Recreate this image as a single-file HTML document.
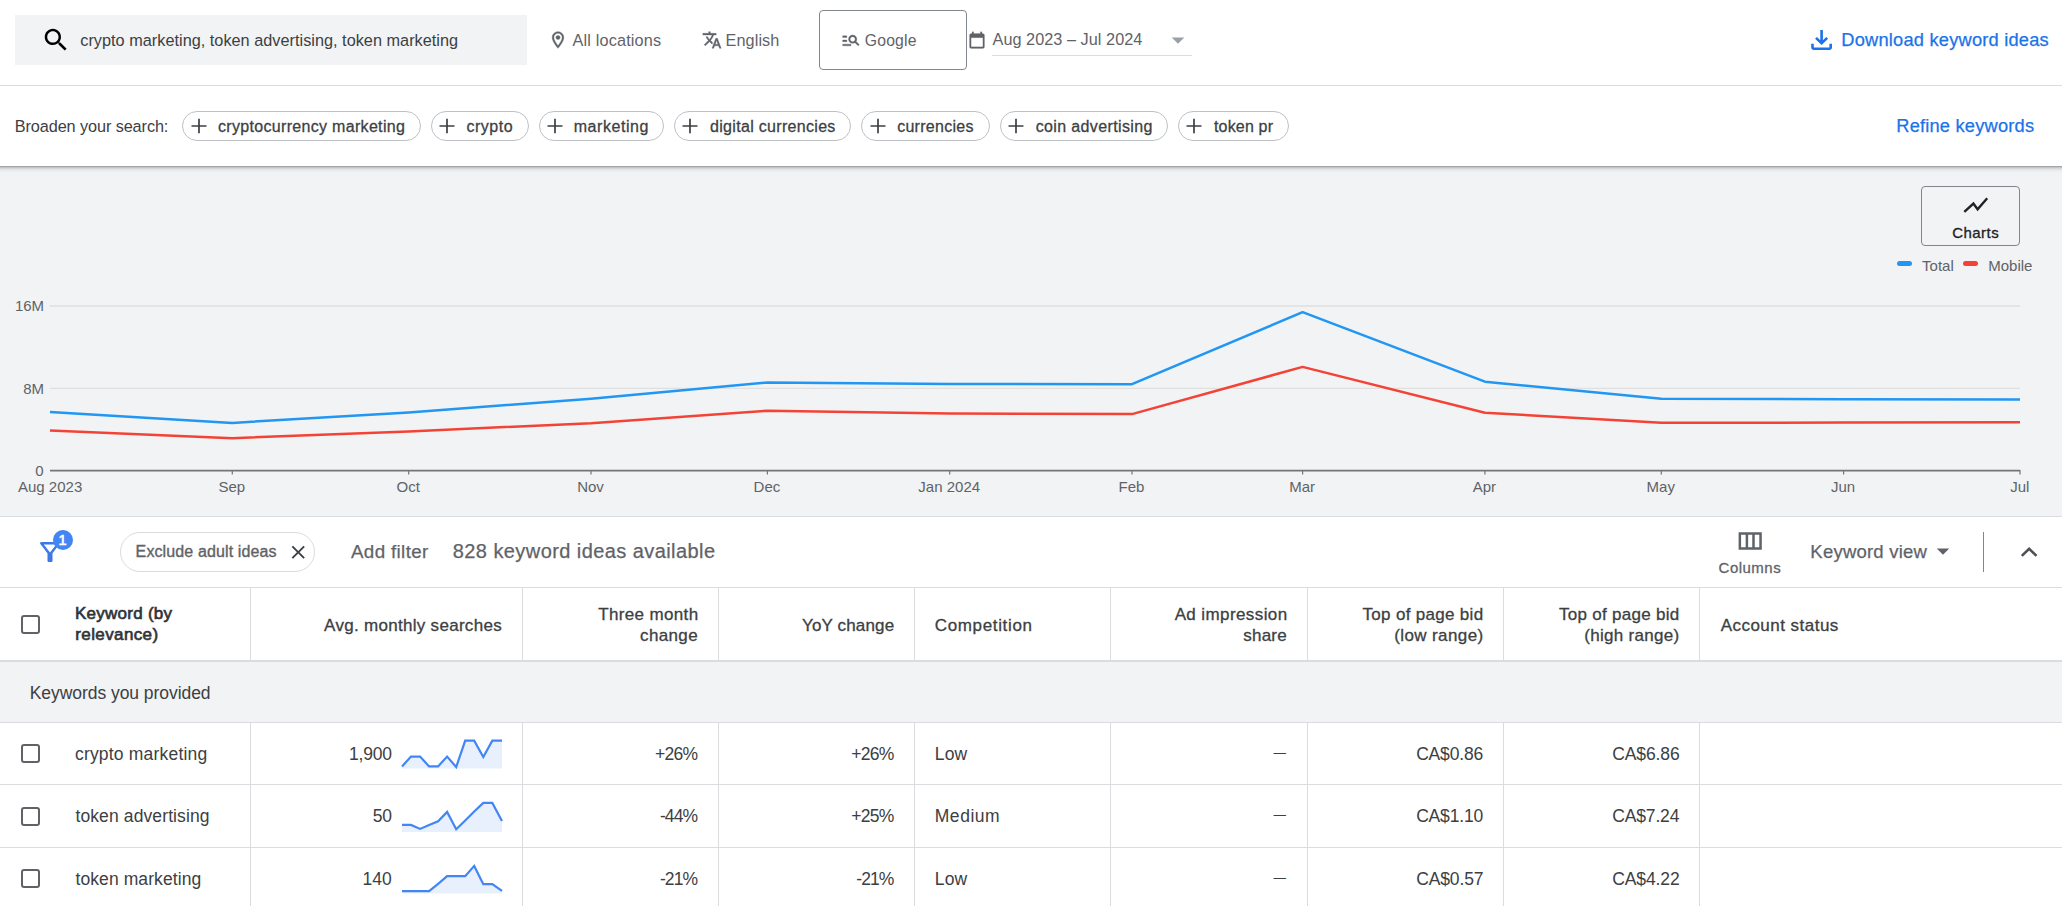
<!DOCTYPE html>
<html lang="en"><head><meta charset="utf-8"><title>Keyword ideas</title>
<style>
html,body{margin:0;padding:0;background:#fff}
body{width:2062px;height:906px;position:relative;overflow:hidden;font-family:"Liberation Sans",sans-serif}
.t{position:absolute;white-space:nowrap;line-height:24px;height:24px}
.i{position:absolute;display:block;overflow:visible}
.b{position:absolute}
</style></head><body>
<div class="b" style="left:15px;top:15px;width:512px;height:50px;background:#f1f3f4"></div>
<svg class="i" style="left:40.90px;top:25.20px" width="30" height="30" viewBox="0 0 24 24" fill="#000" ><path d="M15.5 14h-.79l-.28-.27C15.41 12.59 16 11.11 16 9.5 16 5.91 13.09 3 9.5 3S3 5.91 3 9.5 5.91 16 9.5 16c1.61 0 3.09-.59 4.23-1.57l.27.28v.79l5 4.99L20.49 19l-4.99-5zm-6 0C7.01 14 5 11.99 5 9.5S7.01 5 9.5 5 14 7.01 14 9.5 11.99 14 9.5 14z"/></svg>
<span id="q" class="t" style="left:80.29px;top:28px;font-size:16.25px;color:#3c4043;font-weight:normal;letter-spacing:0.022px;">crypto marketing, token advertising, token marketing</span>
<svg class="i" style="left:547.90px;top:30.00px" width="20" height="20" viewBox="0 0 24 24" fill="#5f6368"  stroke="#5f6368" stroke-width="0.45" stroke-linejoin="round"><path d="M12 2C8.13 2 5 5.13 5 9c0 5.25 7 13 7 13s7-7.75 7-13c0-3.87-3.13-7-7-7zM7 9c0-2.76 2.24-5 5-5s5 2.24 5 5c0 2.88-2.88 7.19-5 9.88C9.92 16.21 7 11.85 7 9z"/><circle cx="12" cy="9" r="2.5"/></svg>
<span id="loc" class="t" style="left:572.44px;top:28px;font-size:16.25px;color:#5f6368;font-weight:normal;letter-spacing:0.167px;">All locations</span>
<svg class="i" style="left:701.70px;top:29.80px" width="20" height="20" viewBox="0 0 24 24" fill="#5f6368"  stroke="#5f6368" stroke-width="0.4" stroke-linejoin="round"><path d="M12.87 15.07l-2.54-2.51.03-.03c1.74-1.94 2.98-4.17 3.71-6.53H17V4h-7V2H8v2H1v1.99h11.17C11.5 7.92 10.44 9.75 9 11.35 8.07 10.32 7.3 9.19 6.69 8h-2c.73 1.63 1.73 3.17 2.98 4.56l-5.09 5.02L4 19l5-5 3.11 3.11.76-2.04zM18.5 10h-2L12 22h2l1.12-3h4.75L21 22h2l-4.5-12zm-2.62 7l1.62-4.33L19.12 17h-3.24z"/></svg>
<span id="eng" class="t" style="left:725.54px;top:28px;font-size:16.25px;color:#5f6368;font-weight:normal;letter-spacing:0.083px;">English</span>
<div class="b" style="left:819px;top:10px;width:148px;height:60px;border:1px solid #80868b;border-radius:4px;box-sizing:border-box"></div>
<svg class="i" style="left:840.50px;top:30.40px" width="20" height="20" viewBox="0 0 24 24" fill="#5f6368"  stroke="#5f6368" stroke-width="0.4" stroke-linejoin="round"><path d="M7 9H2V7h5v2zm0 3H2v2h5v-2zm13.59 7l-3.83-3.83c-.8.52-1.74.83-2.76.83-2.76 0-5-2.24-5-5s2.24-5 5-5 5 2.24 5 5c0 1.02-.31 1.96-.83 2.75L22 17.59 20.59 19zM17 11c0-1.65-1.35-3-3-3s-3 1.35-3 3 1.35 3 3 3 3-1.35 3-3zM2 19h10v-2H2v2z"/></svg>
<span id="goo" class="t" style="left:864.75px;top:29px;font-size:15.75px;color:#5f6368;font-weight:normal;letter-spacing:0.190px;">Google</span>
<svg class="i" style="left:966.90px;top:30.90px" width="20" height="20" viewBox="0 0 24 24" fill="#5f6368"  stroke="#5f6368" stroke-width="0.15" stroke-linejoin="round"><path d="M19 3h-1V1h-2v2H8V1H6v2H5c-1.11 0-1.99.9-1.99 2L3 19c0 1.1.89 2 2 2h14c1.1 0 2-.9 2-2V5c0-1.1-.9-2-2-2zm0 16H5V8h14v11z"/></svg>
<span id="date" class="t" style="left:992.50px;top:27px;font-size:16.25px;color:#5f6368;font-weight:normal;letter-spacing:0.042px;">Aug 2023 – Jul 2024</span>
<svg class="i" style="left:1162.60px;top:24.90px" width="30" height="30" viewBox="0 0 24 24" fill="#9aa0a6" ><path d="M7 10l5 5 5-5z"/></svg>
<div class="b" style="left:992px;top:55px;width:200px;height:1px;background:#dadce0"></div>
<svg class="i" style="left:1805.95px;top:25px" width="31.2" height="30" viewBox="0 0 24 24" preserveAspectRatio="none" fill="#1a73e8"><path d="M18 15v3H6v-3H4v3c0 1.1.9 2 2 2h12c1.1 0 2-.9 2-2v-3h-2zm-1-4l-1.41-1.41L13 12.17V4h-2v8.17L8.41 9.59 7 11l5 5 5-5z"/></svg>
<span id="dl" class="t" style="left:1841.25px;top:28px;font-size:18.25px;color:#1a73e8;font-weight:normal;letter-spacing:0.217px;-webkit-text-stroke:0.25px #1a73e8;">Download keyword ideas</span>
<div class="b" style="left:0px;top:85px;width:2062px;height:1px;background:#dadce0"></div>
<span id="br" class="t" style="left:14.75px;top:114px;font-size:16.25px;color:#3c4043;font-weight:normal;letter-spacing:-0.092px;">Broaden your search:</span>
<div class="b" style="left:182px;top:111px;width:239px;height:30px;border:1px solid #bdc1c6;border-radius:15px;box-sizing:border-box"></div>
<svg class="i" style="left:189.50px;top:117.00px" width="18" height="18" viewBox="0 0 18 18"><path d="M1.5 9h15M9 1.7v14.6" stroke="#3c4043" stroke-width="1.7" fill="none"/></svg>
<span id="chip0" class="t" style="left:218.00px;top:115px;font-size:16px;color:#3c4043;font-weight:normal;letter-spacing:0.315px;-webkit-text-stroke:0.28px #3c4043;">cryptocurrency marketing</span>
<div class="b" style="left:431px;top:111px;width:98px;height:30px;border:1px solid #bdc1c6;border-radius:15px;box-sizing:border-box"></div>
<svg class="i" style="left:437.80px;top:117.00px" width="18" height="18" viewBox="0 0 18 18"><path d="M1.5 9h15M9 1.7v14.6" stroke="#3c4043" stroke-width="1.7" fill="none"/></svg>
<span id="chip1" class="t" style="left:466.50px;top:115px;font-size:16px;color:#3c4043;font-weight:normal;letter-spacing:0.500px;-webkit-text-stroke:0.28px #3c4043;">crypto</span>
<div class="b" style="left:539px;top:111px;width:125px;height:30px;border:1px solid #bdc1c6;border-radius:15px;box-sizing:border-box"></div>
<svg class="i" style="left:545.70px;top:117.00px" width="18" height="18" viewBox="0 0 18 18"><path d="M1.5 9h15M9 1.7v14.6" stroke="#3c4043" stroke-width="1.7" fill="none"/></svg>
<span id="chip2" class="t" style="left:573.69px;top:115px;font-size:16px;color:#3c4043;font-weight:normal;letter-spacing:0.562px;-webkit-text-stroke:0.28px #3c4043;">marketing</span>
<div class="b" style="left:674px;top:111px;width:177px;height:30px;border:1px solid #bdc1c6;border-radius:15px;box-sizing:border-box"></div>
<svg class="i" style="left:681.20px;top:117.00px" width="18" height="18" viewBox="0 0 18 18"><path d="M1.5 9h15M9 1.7v14.6" stroke="#3c4043" stroke-width="1.7" fill="none"/></svg>
<span id="chip3" class="t" style="left:710.04px;top:115px;font-size:16px;color:#3c4043;font-weight:normal;letter-spacing:0.309px;-webkit-text-stroke:0.28px #3c4043;">digital currencies</span>
<div class="b" style="left:861px;top:111px;width:129px;height:30px;border:1px solid #bdc1c6;border-radius:15px;box-sizing:border-box"></div>
<svg class="i" style="left:868.50px;top:117.00px" width="18" height="18" viewBox="0 0 18 18"><path d="M1.5 9h15M9 1.7v14.6" stroke="#3c4043" stroke-width="1.7" fill="none"/></svg>
<span id="chip4" class="t" style="left:897.19px;top:115px;font-size:16px;color:#3c4043;font-weight:normal;letter-spacing:0.267px;-webkit-text-stroke:0.28px #3c4043;">currencies</span>
<div class="b" style="left:1000px;top:111px;width:168px;height:30px;border:1px solid #bdc1c6;border-radius:15px;box-sizing:border-box"></div>
<svg class="i" style="left:1006.90px;top:117.00px" width="18" height="18" viewBox="0 0 18 18"><path d="M1.5 9h15M9 1.7v14.6" stroke="#3c4043" stroke-width="1.7" fill="none"/></svg>
<span id="chip5" class="t" style="left:1035.64px;top:115px;font-size:16px;color:#3c4043;font-weight:normal;letter-spacing:0.370px;-webkit-text-stroke:0.28px #3c4043;">coin advertising</span>
<div class="b" style="left:1178px;top:111px;width:111px;height:30px;border:1px solid #bdc1c6;border-radius:15px;box-sizing:border-box"></div>
<svg class="i" style="left:1184.70px;top:117.00px" width="18" height="18" viewBox="0 0 18 18"><path d="M1.5 9h15M9 1.7v14.6" stroke="#3c4043" stroke-width="1.7" fill="none"/></svg>
<span id="chip6" class="t" style="left:1214.00px;top:115px;font-size:16px;color:#3c4043;font-weight:normal;letter-spacing:0.164px;-webkit-text-stroke:0.28px #3c4043;">token pr</span>
<span id="refine" class="t" style="left:1896.25px;top:114px;font-size:18.25px;color:#1a73e8;font-weight:normal;letter-spacing:0.204px;-webkit-text-stroke:0.25px #1a73e8;">Refine keywords</span>
<div class="b" style="left:0px;top:166px;width:2062px;height:350px;background:#f1f3f4"></div>
<div class="b" style="left:0px;top:166px;width:2062px;height:1px;background:#a3a5a6"></div>
<div class="b" style="left:0px;top:167px;width:2062px;height:1px;background:#c2c4c6"></div>
<div class="b" style="left:0px;top:168px;width:2062px;height:1px;background:#d5d7d9"></div>
<div class="b" style="left:0px;top:169px;width:2062px;height:1px;background:#e2e3e5"></div>
<div class="b" style="left:0px;top:170px;width:2062px;height:1px;background:#e9ebed"></div>
<div class="b" style="left:0px;top:171px;width:2062px;height:1px;background:#edeff1"></div>
<div class="b" style="left:0px;top:172px;width:2062px;height:1px;background:#f0f1f3"></div>
<div class="b" style="left:0px;top:516px;width:2062px;height:1px;background:#dadce0"></div>
<div class="b" style="left:1921px;top:186px;width:99px;height:60px;border:1px solid #80868b;border-radius:4px;box-sizing:border-box"></div>
<svg class="i" style="left:1955px;top:190px" width="40" height="30" viewBox="1955 190 40 30"><polyline points="1964.3,211.8 1973.4,203.6 1977.6,209.3 1987.2,198.2" fill="none" stroke="#202124" stroke-width="2.4" stroke-linejoin="miter"/></svg>
<span id="charts" class="t" style="left:1952.14px;top:221px;font-size:15px;color:#202124;font-weight:normal;letter-spacing:0.470px;-webkit-text-stroke:0.3px #202124;">Charts</span>
<div class="b" style="left:1897px;top:261px;width:15px;height:5px;background:#2196f3;border-radius:2.5px"></div>
<span id="total" class="t" style="left:1922.10px;top:254px;font-size:15px;color:#5f6368;font-weight:normal;letter-spacing:0.000px;">Total</span>
<div class="b" style="left:1963px;top:261px;width:15px;height:5px;background:#f44336;border-radius:2.5px"></div>
<span id="mobile" class="t" style="left:1988.25px;top:254px;font-size:15px;color:#5f6368;font-weight:normal;letter-spacing:0.000px;">Mobile</span>
<svg class="i" style="left:0;top:280px" width="2062" height="236" viewBox="0 280 2062 236"><path d="M50 306h1970M50 388.3h1970" stroke="#e0e0e0" stroke-width="1.3" fill="none"/><path d="M50 470.7h1970" stroke="#757575" stroke-width="1.8" fill="none"/><path d="M232.3 470v4.5M408.7 470v4.5M591.0 470v4.5M767.4 470v4.5M949.7 470v4.5M1132.0 470v4.5M1302.6 470v4.5M1484.9 470v4.5M1661.3 470v4.5M1843.6 470v4.5M2020.0 470v4.5" stroke="#757575" stroke-width="1.2" fill="none"/><polyline points="50.0,412.0 232.3,422.9 408.7,412.4 591.0,398.8 767.4,382.5 949.7,383.9 1132.0,384.2 1302.6,312.2 1484.9,381.7 1661.3,398.8 1843.6,399.2 2020.0,399.6" fill="none" stroke="#2196f3" stroke-width="2.5" stroke-linejoin="round"/><polyline points="50.0,430.4 232.3,438.2 408.7,431.4 591.0,423.2 767.4,410.7 949.7,413.4 1132.0,414.1 1302.6,366.9 1484.9,412.7 1661.3,422.7 1843.6,422.6 2020.0,422.3" fill="none" stroke="#f44336" stroke-width="2.5" stroke-linejoin="round"/></svg>
<span id="xl0" class="t" style="left:18.00px;top:475px;font-size:15px;color:#5f6368;font-weight:normal;letter-spacing:0.000px;">Aug 2023</span>
<span id="xl1" class="t" style="left:231.80px;transform:translateX(-50%);top:475px;font-size:15px;color:#5f6368;font-weight:normal;letter-spacing:0.000px;">Sep</span>
<span id="xl2" class="t" style="left:408.22px;transform:translateX(-50%);top:475px;font-size:15px;color:#5f6368;font-weight:normal;letter-spacing:0.000px;">Oct</span>
<span id="xl3" class="t" style="left:590.51px;transform:translateX(-50%);top:475px;font-size:15px;color:#5f6368;font-weight:normal;letter-spacing:0.000px;">Nov</span>
<span id="xl4" class="t" style="left:766.93px;transform:translateX(-50%);top:475px;font-size:15px;color:#5f6368;font-weight:normal;letter-spacing:0.000px;">Dec</span>
<span id="xl5" class="t" style="left:949.23px;transform:translateX(-50%);top:475px;font-size:15px;color:#5f6368;font-weight:normal;letter-spacing:0.000px;">Jan 2024</span>
<span id="xl6" class="t" style="left:1131.53px;transform:translateX(-50%);top:475px;font-size:15px;color:#5f6368;font-weight:normal;letter-spacing:0.000px;">Feb</span>
<span id="xl7" class="t" style="left:1302.07px;transform:translateX(-50%);top:475px;font-size:15px;color:#5f6368;font-weight:normal;letter-spacing:0.000px;">Mar</span>
<span id="xl8" class="t" style="left:1484.37px;transform:translateX(-50%);top:475px;font-size:15px;color:#5f6368;font-weight:normal;letter-spacing:0.000px;">Apr</span>
<span id="xl9" class="t" style="left:1660.78px;transform:translateX(-50%);top:475px;font-size:15px;color:#5f6368;font-weight:normal;letter-spacing:0.000px;">May</span>
<span id="xl10" class="t" style="left:1843.08px;transform:translateX(-50%);top:475px;font-size:15px;color:#5f6368;font-weight:normal;letter-spacing:0.000px;">Jun</span>
<span id="xl11" class="t" style="right:32.69px;top:475px;font-size:15px;color:#5f6368;font-weight:normal;letter-spacing:0.000px;">Jul</span>
<span id="y16" class="t" style="right:2017.94px;top:294px;font-size:15px;color:#5f6368;font-weight:normal;letter-spacing:0.000px;">16M</span>
<span id="y8" class="t" style="right:2017.94px;top:377px;font-size:15px;color:#5f6368;font-weight:normal;letter-spacing:0.000px;">8M</span>
<span id="y0" class="t" style="right:2018.35px;top:459px;font-size:15px;color:#5f6368;font-weight:normal;letter-spacing:0.000px;">0</span>
<svg class="i" style="left:35.30px;top:537.10px" width="30" height="30" viewBox="0 0 24 24" fill="#3c78e6" ><path d="M7 6h10l-5.01 6.3L7 6zm-2.75-.39C6.27 8.2 10 13 10 13v6c0 .55.45 1 1 1h2c.55 0 1-.45 1-1v-6s3.72-4.8 5.74-7.39c.51-.66.04-1.61-.79-1.61H5.04c-.83 0-1.3.95-.79 1.61z"/></svg>
<div class="b" style="left:53.2px;top:530px;width:19.8px;height:19.8px;background:#4285f4;border-radius:50%"></div>
<span id="badge" class="t" style="left:62.60px;transform:translateX(-50%);top:528px;font-size:14.5px;color:#fff;font-weight:normal;letter-spacing:0.000px;-webkit-text-stroke:0.6px #fff;">1</span>
<div class="b" style="left:120px;top:532px;width:195px;height:40px;border:1px solid #dadce0;border-radius:20px;box-sizing:border-box"></div>
<span id="excl" class="t" style="left:135.60px;top:540px;font-size:16px;color:#5f6368;font-weight:normal;letter-spacing:0.119px;-webkit-text-stroke:0.36px #5f6368;">Exclude adult ideas</span>
<svg class="i" style="left:286.95px;top:541.15px" width="22.5" height="22.5" viewBox="0 0 24 24" fill="#3c4043" ><path d="M19 6.41L17.59 5 12 10.59 6.41 5 5 6.41 10.59 12 5 17.59 6.41 19 12 13.41 17.59 19 19 17.59 13.41 12z"/></svg>
<span id="addf" class="t" style="left:351.00px;top:540px;font-size:18.75px;color:#5f6368;font-weight:normal;letter-spacing:0.361px;-webkit-text-stroke:0.25px #5f6368;">Add filter</span>
<span id="avail" class="t" style="left:452.75px;top:539px;font-size:20px;color:#5f6368;font-weight:normal;letter-spacing:0.425px;-webkit-text-stroke:0.25px #5f6368;">828 keyword ideas available</span>
<svg class="i" style="left:1735px;top:528px" width="30" height="26" viewBox="1735 528 30 26"><path d="M1739.85 533.45h20.7v15.1h-20.7zM1746.9 533.5v15M1753.5 533.5v15" fill="none" stroke="#5f6368" stroke-width="2.5"/></svg>
<span id="cols" class="t" style="left:1718.60px;top:556px;font-size:15px;color:#5f6368;font-weight:normal;letter-spacing:0.475px;-webkit-text-stroke:0.3px #5f6368;">Columns</span>
<span id="kview" class="t" style="left:1810.35px;top:540px;font-size:18.5px;color:#5f6368;font-weight:normal;letter-spacing:0.223px;-webkit-text-stroke:0.25px #5f6368;">Keyword view</span>
<svg class="i" style="left:1928.00px;top:535.90px" width="30" height="30" viewBox="0 0 24 24" fill="#5f6368" ><path d="M7 10l5 5 5-5z"/></svg>
<div class="b" style="left:1983px;top:532px;width:1px;height:40px;background:#80868b"></div>
<svg class="i" style="left:2015px;top:540px" width="30" height="24" viewBox="2015 540 30 24"><polyline points="2021.8,555.9 2029.15,548.75 2036.5,555.9" fill="none" stroke="#4d5156" stroke-width="2.6"/></svg>
<div class="b" style="left:0px;top:587px;width:2062px;height:1px;background:#dadce0"></div>
<div class="b" style="left:250px;top:588px;width:1px;height:72px;background:#dadce0"></div>
<div class="b" style="left:250px;top:723px;width:1px;height:183px;background:#dadce0"></div>
<div class="b" style="left:522px;top:588px;width:1px;height:72px;background:#dadce0"></div>
<div class="b" style="left:522px;top:723px;width:1px;height:183px;background:#dadce0"></div>
<div class="b" style="left:718px;top:588px;width:1px;height:72px;background:#dadce0"></div>
<div class="b" style="left:718px;top:723px;width:1px;height:183px;background:#dadce0"></div>
<div class="b" style="left:914px;top:588px;width:1px;height:72px;background:#dadce0"></div>
<div class="b" style="left:914px;top:723px;width:1px;height:183px;background:#dadce0"></div>
<div class="b" style="left:1110px;top:588px;width:1px;height:72px;background:#dadce0"></div>
<div class="b" style="left:1110px;top:723px;width:1px;height:183px;background:#dadce0"></div>
<div class="b" style="left:1307px;top:588px;width:1px;height:72px;background:#dadce0"></div>
<div class="b" style="left:1307px;top:723px;width:1px;height:183px;background:#dadce0"></div>
<div class="b" style="left:1503px;top:588px;width:1px;height:72px;background:#dadce0"></div>
<div class="b" style="left:1503px;top:723px;width:1px;height:183px;background:#dadce0"></div>
<div class="b" style="left:1699px;top:588px;width:1px;height:72px;background:#dadce0"></div>
<div class="b" style="left:1699px;top:723px;width:1px;height:183px;background:#dadce0"></div>
<div class="b" style="left:0px;top:660px;width:2062px;height:2px;background:#dadce0"></div>
<div class="b" style="left:0px;top:662px;width:2062px;height:60px;background:#f1f3f4"></div>
<div class="b" style="left:0px;top:722px;width:2062px;height:1px;background:#dadce0"></div>
<div class="b" style="left:0px;top:784px;width:2062px;height:1px;background:#dadce0"></div>
<div class="b" style="left:0px;top:847px;width:2062px;height:1px;background:#dadce0"></div>
<div class="b" style="left:21px;top:615px;width:19px;height:19px;border:2px solid #5f6368;border-radius:3px;box-sizing:border-box"></div>
<span id="h1a" class="t" style="left:75.00px;top:602px;font-size:17px;color:#303336;font-weight:normal;letter-spacing:0.260px;-webkit-text-stroke:0.65px #303336;">Keyword (by</span>
<span id="h1b" class="t" style="left:75.25px;top:623px;font-size:17px;color:#303336;font-weight:normal;letter-spacing:0.389px;-webkit-text-stroke:0.65px #303336;">relevance)</span>
<span id="h2" class="t" style="right:1560.35px;top:614px;font-size:17px;color:#3c4043;font-weight:normal;letter-spacing:0.297px;margin-right:-0.297px;-webkit-text-stroke:0.3px #3c4043;">Avg. monthly searches</span>
<span id="h3a" class="t" style="right:1363.85px;top:603px;font-size:17px;color:#3c4043;font-weight:normal;letter-spacing:0.355px;margin-right:-0.355px;-webkit-text-stroke:0.3px #3c4043;">Three month</span>
<span id="h3b" class="t" style="right:1364.35px;top:624px;font-size:17px;color:#3c4043;font-weight:normal;letter-spacing:0.370px;margin-right:-0.370px;-webkit-text-stroke:0.3px #3c4043;">change</span>
<span id="h4" class="t" style="right:1167.85px;top:614px;font-size:17px;color:#3c4043;font-weight:normal;letter-spacing:0.150px;margin-right:-0.150px;-webkit-text-stroke:0.3px #3c4043;">YoY change</span>
<span id="h5" class="t" style="left:934.75px;top:614px;font-size:17px;color:#3c4043;font-weight:normal;letter-spacing:0.650px;-webkit-text-stroke:0.3px #3c4043;">Competition</span>
<span id="h6a" class="t" style="right:774.85px;top:603px;font-size:17px;color:#3c4043;font-weight:normal;letter-spacing:0.400px;margin-right:-0.400px;-webkit-text-stroke:0.3px #3c4043;">Ad impression</span>
<span id="h6b" class="t" style="right:775.35px;top:624px;font-size:17px;color:#3c4043;font-weight:normal;letter-spacing:0.213px;margin-right:-0.213px;-webkit-text-stroke:0.3px #3c4043;">share</span>
<span id="h7a" class="t" style="right:578.85px;top:603px;font-size:17px;color:#3c4043;font-weight:normal;letter-spacing:0.311px;margin-right:-0.311px;-webkit-text-stroke:0.3px #3c4043;">Top of page bid</span>
<span id="h7b" class="t" style="right:578.85px;top:624px;font-size:17px;color:#3c4043;font-weight:normal;letter-spacing:0.395px;margin-right:-0.395px;-webkit-text-stroke:0.3px #3c4043;">(low range)</span>
<span id="h8a" class="t" style="right:382.75px;top:603px;font-size:17px;color:#3c4043;font-weight:normal;letter-spacing:0.289px;margin-right:-0.289px;-webkit-text-stroke:0.3px #3c4043;">Top of page bid</span>
<span id="h8b" class="t" style="right:382.75px;top:624px;font-size:17px;color:#3c4043;font-weight:normal;letter-spacing:0.300px;margin-right:-0.300px;-webkit-text-stroke:0.3px #3c4043;">(high range)</span>
<span id="h9" class="t" style="left:1720.69px;top:614px;font-size:17px;color:#3c4043;font-weight:normal;letter-spacing:0.473px;-webkit-text-stroke:0.3px #3c4043;">Account status</span>
<span id="grp" class="t" style="left:29.75px;top:681px;font-size:17.5px;color:#3c4043;font-weight:normal;letter-spacing:-0.055px;">Keywords you provided</span>
<div class="b" style="left:21px;top:744px;width:19px;height:19px;border:2px solid #5f6368;border-radius:3px;box-sizing:border-box"></div>
<span id="r0kw" class="t" style="left:74.94px;top:742px;font-size:17.5px;color:#3c4043;font-weight:normal;letter-spacing:0.193px;">crypto marketing</span>
<span id="r0n" class="t" style="right:1670.14px;top:742px;font-size:17.5px;color:#3c4043;font-weight:normal;letter-spacing:-0.250px;margin-right:0.250px;">1,900</span>
<span id="r0tm" class="t" style="right:1363.94px;top:742px;font-size:17.5px;color:#3c4043;font-weight:normal;letter-spacing:-0.683px;margin-right:0.683px;">+26%</span>
<span id="r0yoy" class="t" style="right:1167.60px;top:742px;font-size:17.5px;color:#3c4043;font-weight:normal;letter-spacing:-0.683px;margin-right:0.683px;">+26%</span>
<span id="r0comp" class="t" style="left:934.75px;top:742px;font-size:17.5px;color:#3c4043;font-weight:normal;letter-spacing:0.150px;">Low</span>
<span id="r0ais" class="t" style="right:776.29px;top:741px;font-size:12px;color:#3c4043;font-weight:normal;letter-spacing:0.000px;-webkit-text-stroke:0.3px #3c4043;">—</span>
<span id="r0lo" class="t" style="right:578.79px;top:742px;font-size:17.5px;color:#3c4043;font-weight:normal;letter-spacing:-0.175px;margin-right:0.175px;">CA$0.86</span>
<span id="r0hi" class="t" style="right:382.39px;top:742px;font-size:17.5px;color:#3c4043;font-weight:normal;letter-spacing:-0.133px;margin-right:0.133px;">CA$6.86</span>
<svg class="i" style="left:400px;top:733px" width="104" height="40" viewBox="400 733 104 40"><polygon points="402,768.6 402.0,766.4 411.0,756.6 420.1,756.6 429.1,766.4 438.1,766.4 447.1,756.6 456.2,767.0 465.2,740.6 474.2,740.6 483.3,757.0 492.3,740.6 502.0,740.6 502,768.6" fill="#e8f0fe"/><polyline points="402.0,766.4 411.0,756.6 420.1,756.6 429.1,766.4 438.1,766.4 447.1,756.6 456.2,767.0 465.2,740.6 474.2,740.6 483.3,757.0 492.3,740.6 502.0,740.6" fill="none" stroke="#4285f4" stroke-width="2.2" stroke-linejoin="miter"/></svg>
<div class="b" style="left:21px;top:807px;width:19px;height:19px;border:2px solid #5f6368;border-radius:3px;box-sizing:border-box"></div>
<span id="r1kw" class="t" style="left:75.44px;top:804px;font-size:17.5px;color:#3c4043;font-weight:normal;letter-spacing:0.113px;">token advertising</span>
<span id="r1n" class="t" style="right:1670.14px;top:804px;font-size:17.5px;color:#3c4043;font-weight:normal;letter-spacing:-0.250px;margin-right:0.250px;">50</span>
<span id="r1tm" class="t" style="right:1363.94px;top:804px;font-size:17.5px;color:#3c4043;font-weight:normal;letter-spacing:-0.900px;margin-right:0.900px;">-44%</span>
<span id="r1yoy" class="t" style="right:1167.60px;top:804px;font-size:17.5px;color:#3c4043;font-weight:normal;letter-spacing:-0.683px;margin-right:0.683px;">+25%</span>
<span id="r1comp" class="t" style="left:934.75px;top:804px;font-size:17.5px;color:#3c4043;font-weight:normal;letter-spacing:0.540px;">Medium</span>
<span id="r1ais" class="t" style="right:776.29px;top:803px;font-size:12px;color:#3c4043;font-weight:normal;letter-spacing:0.000px;-webkit-text-stroke:0.3px #3c4043;">—</span>
<span id="r1lo" class="t" style="right:578.79px;top:804px;font-size:17.5px;color:#3c4043;font-weight:normal;letter-spacing:-0.175px;margin-right:0.175px;">CA$1.10</span>
<span id="r1hi" class="t" style="right:382.64px;top:804px;font-size:17.5px;color:#3c4043;font-weight:normal;letter-spacing:-0.175px;margin-right:0.175px;">CA$7.24</span>
<svg class="i" style="left:400px;top:796px" width="104" height="40" viewBox="400 796 104 40"><polygon points="402,831.9 402.0,824.9 411.0,824.9 420.1,828.9 429.1,825.1 438.1,821.3 447.1,811.9 456.2,829.3 465.2,820.5 474.2,811.5 483.3,802.9 492.3,802.9 502.0,820.9 502,831.9" fill="#e8f0fe"/><polyline points="402.0,824.9 411.0,824.9 420.1,828.9 429.1,825.1 438.1,821.3 447.1,811.9 456.2,829.3 465.2,820.5 474.2,811.5 483.3,802.9 492.3,802.9 502.0,820.9" fill="none" stroke="#4285f4" stroke-width="2.2" stroke-linejoin="miter"/></svg>
<div class="b" style="left:21px;top:869px;width:19px;height:19px;border:2px solid #5f6368;border-radius:3px;box-sizing:border-box"></div>
<span id="r2kw" class="t" style="left:75.44px;top:867px;font-size:17.5px;color:#3c4043;font-weight:normal;letter-spacing:0.096px;">token marketing</span>
<span id="r2n" class="t" style="right:1670.14px;top:867px;font-size:17.5px;color:#3c4043;font-weight:normal;letter-spacing:0.075px;margin-right:-0.075px;">140</span>
<span id="r2tm" class="t" style="right:1363.94px;top:867px;font-size:17.5px;color:#3c4043;font-weight:normal;letter-spacing:-0.900px;margin-right:0.900px;">-21%</span>
<span id="r2yoy" class="t" style="right:1167.60px;top:867px;font-size:17.5px;color:#3c4043;font-weight:normal;letter-spacing:-0.900px;margin-right:0.900px;">-21%</span>
<span id="r2comp" class="t" style="left:934.75px;top:867px;font-size:17.5px;color:#3c4043;font-weight:normal;letter-spacing:0.150px;">Low</span>
<span id="r2ais" class="t" style="right:776.29px;top:866px;font-size:12px;color:#3c4043;font-weight:normal;letter-spacing:0.000px;-webkit-text-stroke:0.3px #3c4043;">—</span>
<span id="r2lo" class="t" style="right:578.54px;top:867px;font-size:17.5px;color:#3c4043;font-weight:normal;letter-spacing:-0.133px;margin-right:0.133px;">CA$0.57</span>
<span id="r2hi" class="t" style="right:382.39px;top:867px;font-size:17.5px;color:#3c4043;font-weight:normal;letter-spacing:-0.133px;margin-right:0.133px;">CA$4.22</span>
<svg class="i" style="left:400px;top:858px" width="104" height="40" viewBox="400 858 104 40"><polygon points="402,893.4 402.0,891.2 411.0,891.2 420.1,891.2 429.1,891.2 438.1,883.8 447.1,876.2 456.2,876.2 465.2,876.2 474.2,865.9 483.3,884.2 492.3,884.2 502.0,890.8 502,893.4" fill="#e8f0fe"/><polyline points="402.0,891.2 411.0,891.2 420.1,891.2 429.1,891.2 438.1,883.8 447.1,876.2 456.2,876.2 465.2,876.2 474.2,865.9 483.3,884.2 492.3,884.2 502.0,890.8" fill="none" stroke="#4285f4" stroke-width="2.2" stroke-linejoin="miter"/></svg>
</body></html>
